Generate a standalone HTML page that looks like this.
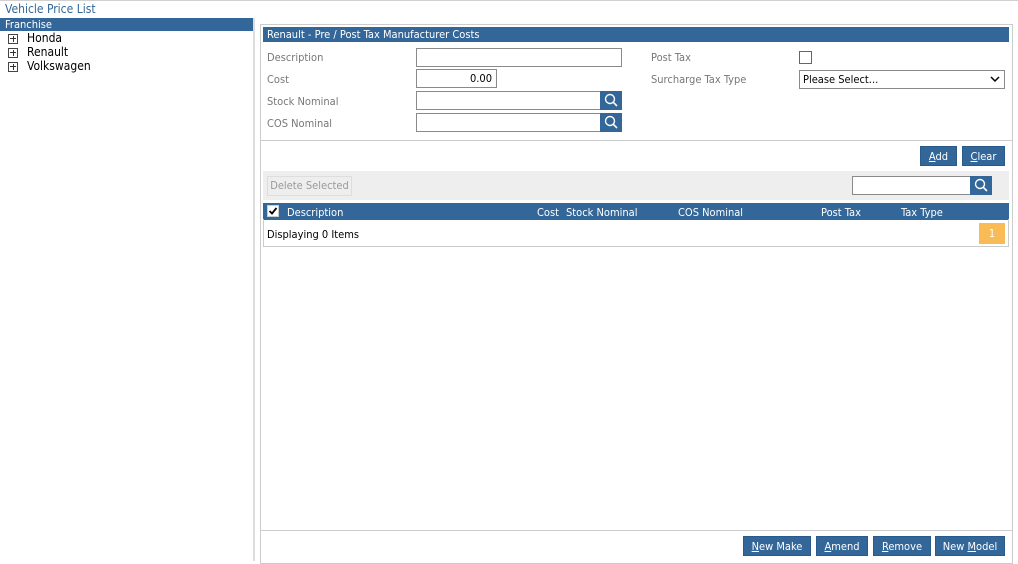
<!DOCTYPE html>
<html><head><style>
*{box-sizing:border-box;margin:0;padding:0}
body{width:1018px;height:561px;position:relative;background:#fff;font-family:"DejaVu Sans Condensed","Liberation Sans",sans-serif;font-size:11px;color:#000;overflow:hidden}
.a{position:absolute}
.bar{background:#336699;color:#fff}
.lbl{color:#777;font-size:11px}
.inp{background:#fff;border:1px solid #8a8a8a}
.btn{background:#336699;color:#fff;text-align:center;font-size:11px;line-height:19px;border:1px solid #2a5a8a}
u{text-decoration:underline}
.tr{height:14px;line-height:14px;position:relative;padding-left:19px}
.pl{position:absolute;left:0;top:3px;width:10px;height:10px;border:1px solid #444}
.pl:before{content:"";position:absolute;left:1px;top:3px;width:6px;height:1px;background:#333}
.pl:after{content:"";position:absolute;left:3.5px;top:1px;width:1px;height:6px;background:#333}
</style></head><body>
<div class="a" style="left:0;top:0;width:1018px;height:1px;background:#d0d0d0"></div>
<div class="a" style="left:5px;top:2px;color:#336699;font-size:12px">Vehicle Price List</div>
<div class="a bar" style="left:0;top:18px;width:253px;height:13px;font-size:11px;line-height:13px;padding-left:5px">Franchise</div>
<div class="a" style="left:253px;top:18px;width:2px;height:543px;background:#ddd"></div>
<div class="a" style="left:8px;top:31px;font-size:12px">
<div class="tr"><span class="pl"></span>Honda</div>
<div class="tr"><span class="pl"></span>Renault</div>
<div class="tr"><span class="pl"></span>Volkswagen</div>
</div>
<div class="a" style="left:260px;top:24px;width:753px;height:540px;border:1px solid #ccc"></div>
<div class="a bar" style="left:263px;top:27px;width:746px;height:15px;line-height:15px;padding-left:4px">Renault - Pre / Post Tax Manufacturer Costs</div>
<div class="a lbl" style="left:267px;top:51px">Description</div>
<div class="a lbl" style="left:267px;top:73px">Cost</div>
<div class="a lbl" style="left:267px;top:95px">Stock Nominal</div>
<div class="a lbl" style="left:267px;top:117px">COS Nominal</div>
<div class="a inp" style="left:416px;top:48px;width:206px;height:19px"></div>
<div class="a inp" style="left:416px;top:69px;width:81px;height:19px;text-align:right;padding-right:4px;line-height:17px">0.00</div>
<div class="a inp" style="left:416px;top:91px;width:185px;height:19px"></div>
<div class="a inp" style="left:416px;top:113px;width:185px;height:19px"></div>
<svg class="a" style="left:600px;top:91px" width="22" height="19"><rect width="22" height="19" fill="#336699"/><circle cx="10" cy="8" r="4.5" fill="none" stroke="#fff" stroke-width="1.4"/><line x1="13.3" y1="11.3" x2="17" y2="15" stroke="#fff" stroke-width="1.6"/></svg>
<svg class="a" style="left:600px;top:113px" width="22" height="19"><rect width="22" height="19" fill="#336699"/><circle cx="10" cy="8" r="4.5" fill="none" stroke="#fff" stroke-width="1.4"/><line x1="13.3" y1="11.3" x2="17" y2="15" stroke="#fff" stroke-width="1.6"/></svg>
<div class="a lbl" style="left:651px;top:51px">Post Tax</div>
<div class="a lbl" style="left:651px;top:73px">Surcharge Tax Type</div>
<div class="a" style="left:799px;top:51px;width:13px;height:13px;border:1px solid #666"></div>
<div class="a inp" style="left:799px;top:70px;width:206px;height:19px;line-height:17px;padding-left:3px;color:#000">Please Select...
<svg class="a" style="right:4px;top:5px" width="10" height="7"><path d="M1 1L5 5L9 1" fill="none" stroke="#000" stroke-width="1.5"/></svg></div>
<div class="a" style="left:261px;top:140px;width:751px;height:1px;background:#ccc"></div>
<div class="a btn" style="left:920px;top:146px;width:37px;height:20px"><u>A</u>dd</div>
<div class="a btn" style="left:962px;top:146px;width:43px;height:20px"><u>C</u>lear</div>
<div class="a" style="left:263px;top:171px;width:746px;height:29px;background:#eee"></div>
<div class="a" style="left:267px;top:176px;width:85px;height:20px;border:1px solid #ddd;color:#999;line-height:18px;text-align:center">Delete Selected</div>
<div class="a inp" style="left:852px;top:176px;width:119px;height:19px"></div>
<svg class="a" style="left:970px;top:176px" width="22" height="19"><rect width="22" height="19" fill="#336699"/><circle cx="10" cy="8" r="4.5" fill="none" stroke="#fff" stroke-width="1.4"/><line x1="13.3" y1="11.3" x2="17" y2="15" stroke="#fff" stroke-width="1.6"/></svg>
<div class="a bar" style="left:263px;top:203px;width:746px;height:17px;line-height:17px"></div>
<svg class="a" style="left:267px;top:205px" width="12" height="12"><rect x=".5" y=".5" width="11" height="11" fill="#fff" stroke="#ccc"/><path d="M2.5 6L5 8.5L9.5 3" fill="none" stroke="#000" stroke-width="1.8"/></svg>
<div class="a" style="left:287px;top:206px;color:#fff">Description</div>
<div class="a" style="left:537px;top:206px;color:#fff">Cost</div>
<div class="a" style="left:566px;top:206px;color:#fff">Stock Nominal</div>
<div class="a" style="left:678px;top:206px;color:#fff">COS Nominal</div>
<div class="a" style="left:821px;top:206px;color:#fff">Post Tax</div>
<div class="a" style="left:901px;top:206px;color:#fff">Tax Type</div>
<div class="a" style="left:263px;top:219px;width:746px;height:28px;border:1px solid #ccc;border-top:none"></div>
<div class="a" style="left:267px;top:228px">Displaying 0 Items</div>
<div class="a" style="left:979px;top:223px;width:26px;height:21px;background:#f9bb55;color:#fff;text-align:center;line-height:21px">1</div>
<div class="a" style="left:261px;top:530px;width:751px;height:1px;background:#ccc"></div>
<div class="a btn" style="left:743px;top:536px;width:68px;height:20px"><u>N</u>ew Make</div>
<div class="a btn" style="left:816px;top:536px;width:52px;height:20px"><u>A</u>mend</div>
<div class="a btn" style="left:873px;top:536px;width:58px;height:20px"><u>R</u>emove</div>
<div class="a btn" style="left:935px;top:536px;width:70px;height:20px">New <u>M</u>odel</div>
</body></html>
